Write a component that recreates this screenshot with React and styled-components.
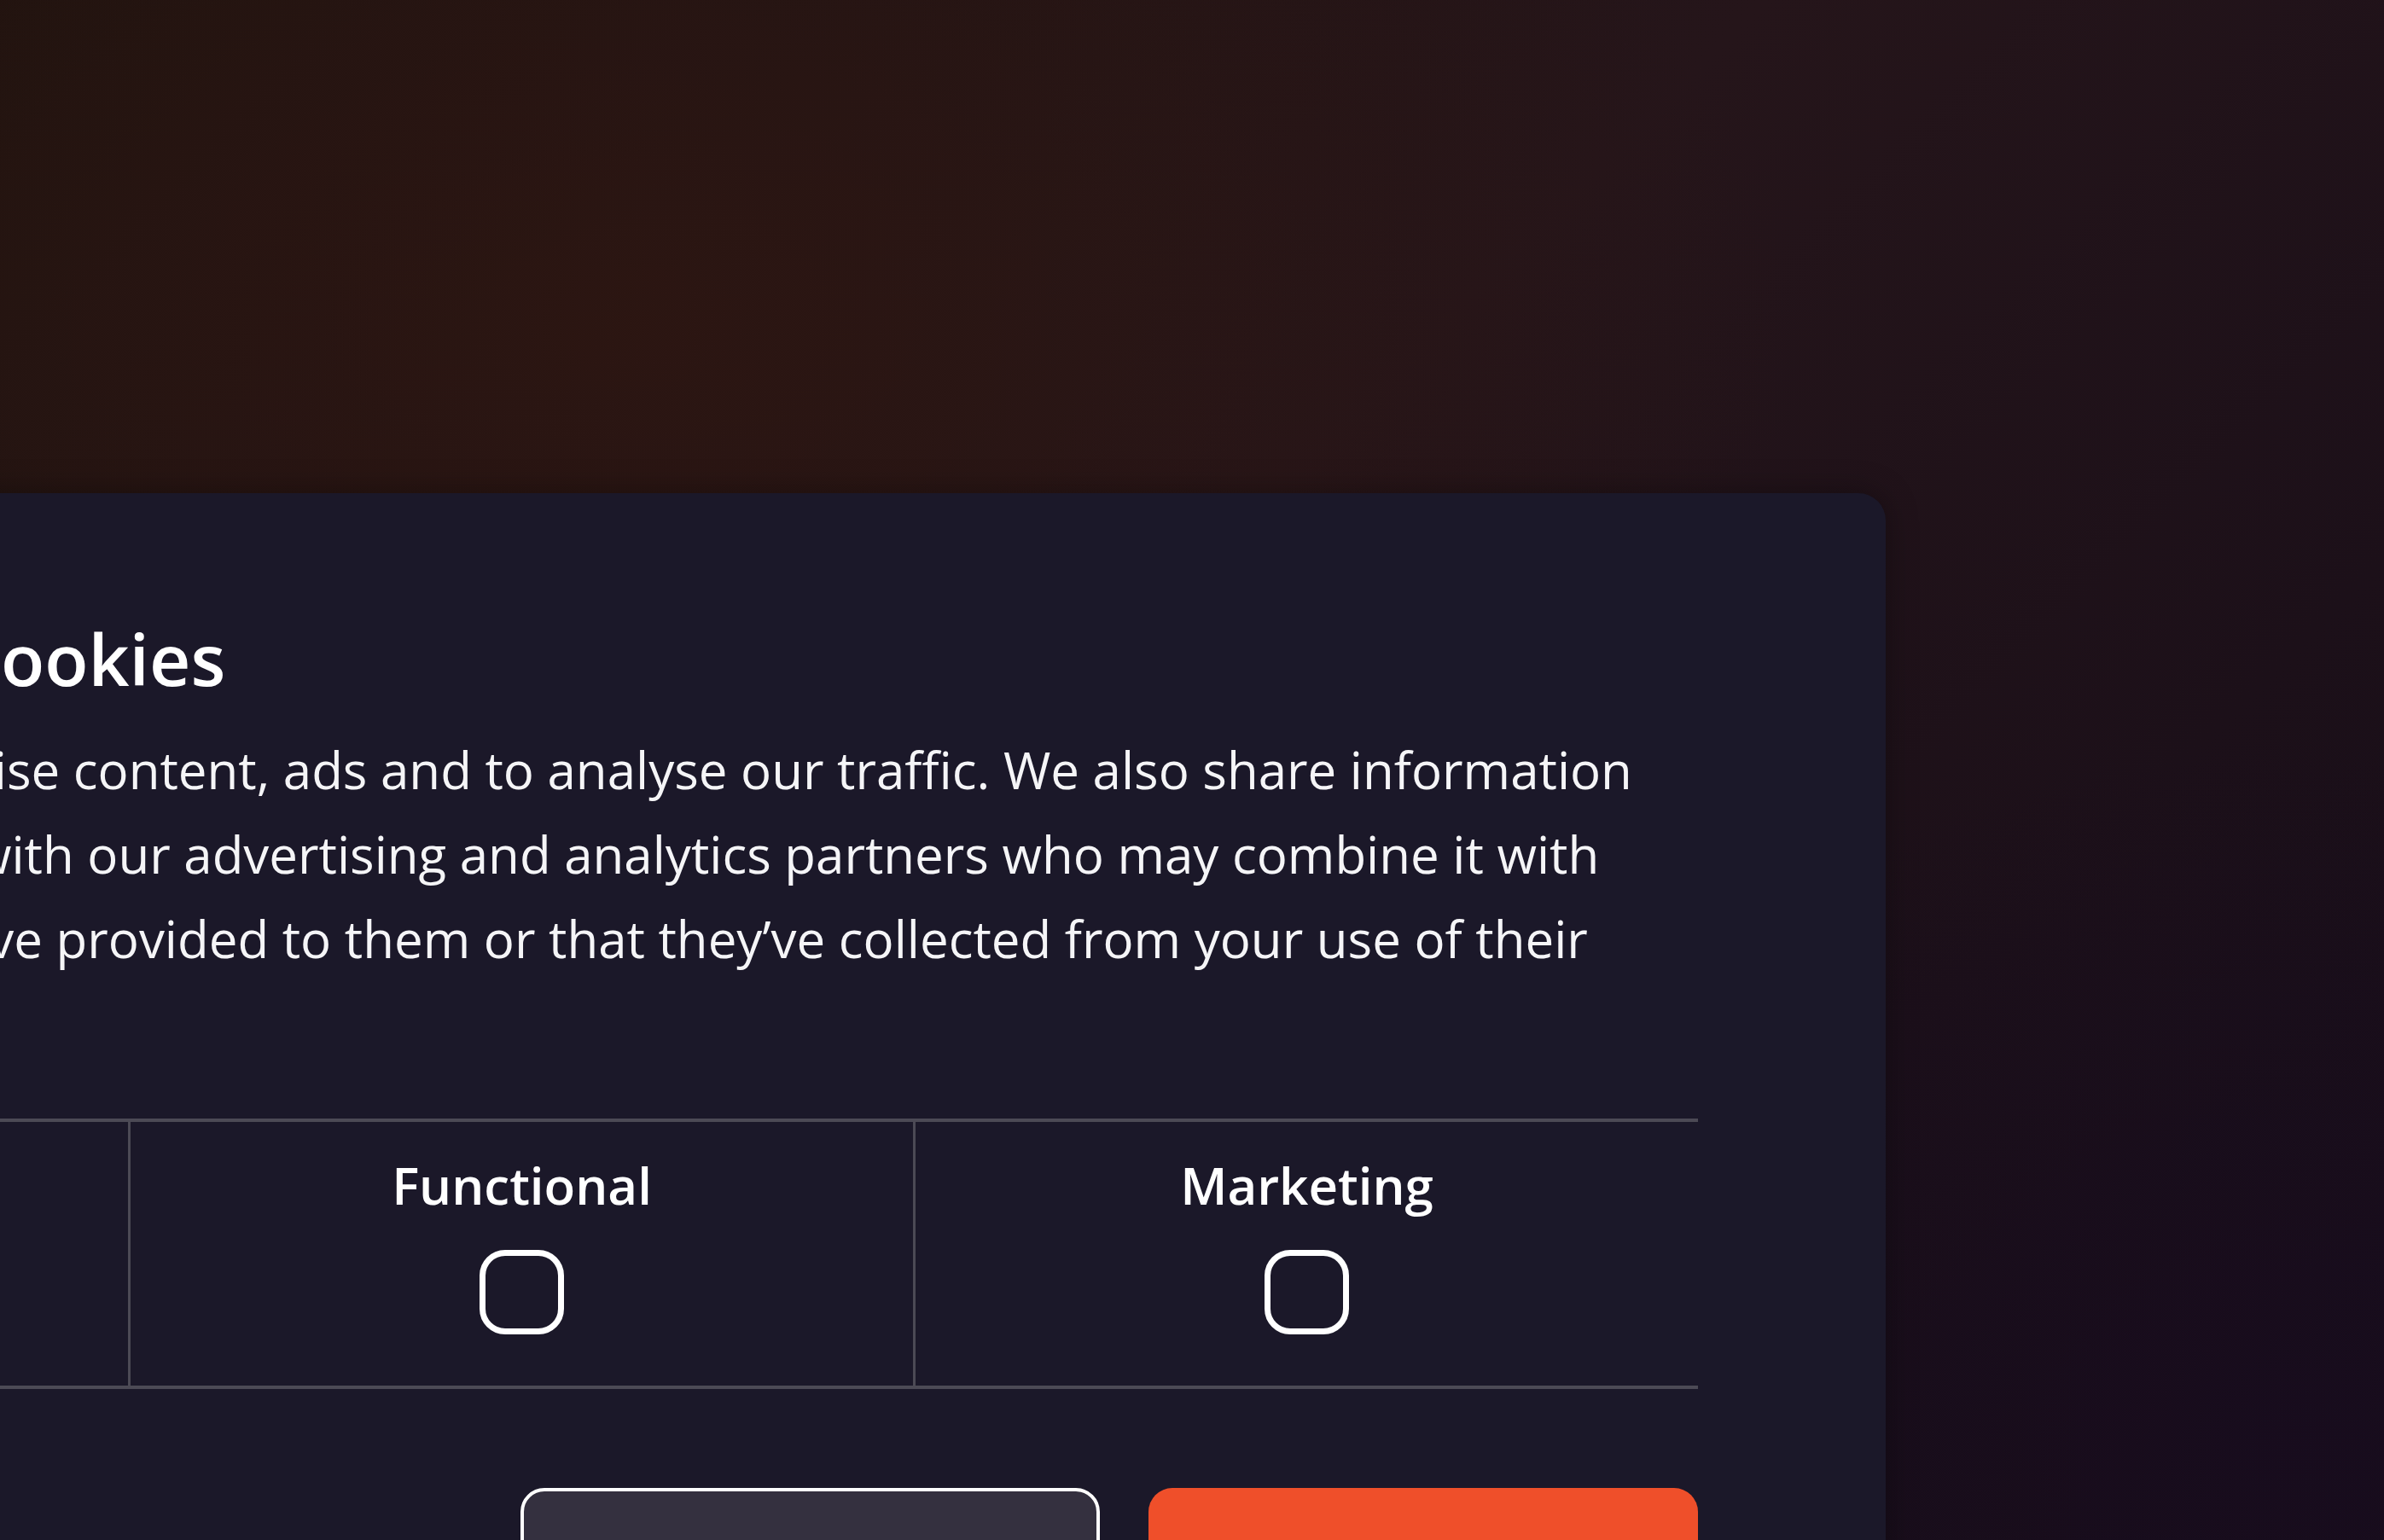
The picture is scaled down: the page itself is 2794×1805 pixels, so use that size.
import React from "react";
import styled, { createGlobalStyle } from "styled-components";

const GlobalStyle = createGlobalStyle`
  html, body {
    margin: 0;
    padding: 0;
    height: 100%;
    overflow: hidden;
  }
  body {
    font-family: "Open Sans", "Noto Sans", sans-serif;
    background: #1a1017;
  }
`;

const Page = styled.main`
  width: 100vw;
  height: 100vh;
  overflow: hidden;
  padding-top: 578px;
  box-sizing: border-box;
  background:
    radial-gradient(ellipse 1800px 1100px at 750px 380px, rgba(46, 22, 17, 0.8), rgba(46, 22, 17, 0) 75%),
    radial-gradient(ellipse 1400px 1200px at 2700px 1700px, rgba(24, 12, 30, 0.9), rgba(24, 12, 30, 0) 70%),
    linear-gradient(135deg, #1f130f 0%, #25151a 45%, #1c1019 75%, #160d18 100%);
`;

const Dialog = styled.section`
  margin-left: -990px;
  width: 3200px;
  box-sizing: border-box;
  padding: 144px 220px 0;
  background: #1b1829;
  border-radius: 32px;
  box-shadow: 0 0 36px rgba(0, 0, 0, 0.35);
  color: #ffffff;
`;

const Title = styled.h2`
  margin: 0;
  font-size: 84px;
  line-height: 100px;
  font-weight: 600;
`;

const Text = styled.p`
  margin: 31px 0 0;
  font-size: 60px;
  line-height: 99px;
  font-weight: 400;
  color: #f5f5f7;
`;

const Choices = styled.div`
  margin-top: 62px;
  display: grid;
  grid-template-columns: repeat(3, 1fr);
  border-top: 4px solid #4c4a55;
  border-bottom: 4px solid #4c4a55;
`;

const Choice = styled.label`
  display: flex;
  flex-direction: column;
  align-items: center;
  padding: 34px 0 60px;
  border-left: ${(p) => (p.first ? "none" : "3px solid #4c4a55")};
  cursor: pointer;
`;

const ChoiceName = styled.span`
  font-size: 60px;
  line-height: 80px;
  font-weight: 600;
`;

const Box = styled.input.attrs({ type: "checkbox" })`
  appearance: none;
  margin: 36px 0 0;
  width: 99px;
  height: 99px;
  box-sizing: border-box;
  border: 7px solid #ffffff;
  border-radius: 30px;
  background: transparent;
`;

const Actions = styled.div`
  margin-top: 116px;
  display: flex;
  justify-content: flex-end;
  gap: 57px;
`;

const Button = styled.button`
  width: ${(p) => p.w}px;
  height: 170px;
  box-sizing: border-box;
  border-radius: 28px;
  font-family: inherit;
  font-size: 58px;
  font-weight: 600;
  color: #ffffff;
  border: ${(p) => (p.primary ? "none" : "4px solid #ffffff")};
  background: ${(p) => (p.primary ? "#ef4f2a" : "#34303f")};
  cursor: pointer;
`;

const categories = ["Necessary", "Functional", "Marketing"];

export default function App() {
  return (
    <Page>
      <GlobalStyle />
      <Dialog>
        <Title>This website uses cookies</Title>
        <Text>
          We use cookies to personalise content, ads and to analyse our traffic. We also share
          information about your use of our site with our advertising and analytics partners who
          may combine it with other information that you’ve provided to them or that they’ve
          collected from your use of their services.
        </Text>
        <Choices>
          {categories.map((name, i) => (
            <Choice key={name} first={i === 0}>
              <ChoiceName>{name}</ChoiceName>
              <Box defaultChecked={i === 0} disabled={i === 0} />
            </Choice>
          ))}
        </Choices>
        <Actions>
          <Button w={679}>Customise</Button>
          <Button w={644} primary>
            Allow all
          </Button>
        </Actions>
      </Dialog>
    </Page>
  );
}
